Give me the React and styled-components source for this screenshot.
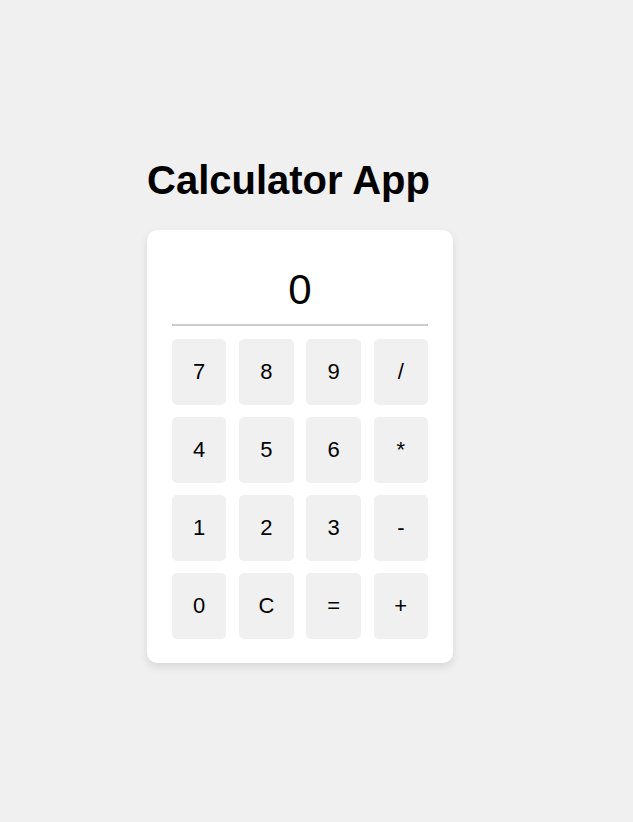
import React, { useState } from 'react';
import styled, { createGlobalStyle } from 'styled-components';

const GlobalStyle = createGlobalStyle`
  html, body {
    margin: 0;
    padding: 0;
    background: #f0f0f0;
    font-family: "Liberation Sans", Arial, sans-serif;
  }
`;

const Page = styled.div`
  display: flex;
  justify-content: center;
  padding-top: 158px;
  min-height: 822px;
  box-sizing: border-box;
`;

const Column = styled.div`
  width: 339px;
`;

const Title = styled.h1`
  margin: 0 0 27px;
  font-size: 40px;
  font-weight: bold;
  color: #000;
`;

const Card = styled.div`
  width: 306px;
  box-sizing: border-box;
  padding: 25px 25px 24px;
  background: #fff;
  border-radius: 10px;
  box-shadow: 0 4px 8px rgba(0, 0, 0, 0.1);
`;

const Display = styled.div`
  height: 71px;
  box-sizing: border-box;
  padding: 11px 0 10px;
  border-bottom: 2px solid #ccc;
  text-align: center;
  font-size: 42px;
  line-height: 48px;
  color: #000;
  margin-bottom: 13px;
`;

const Keys = styled.div`
  display: grid;
  grid-template-columns: repeat(4, 1fr);
  gap: 12px 12.8px;
`;

const Key = styled.button`
  height: 66px;
  border: none;
  border-radius: 5px;
  background: #f0f0f0;
  font-family: "Liberation Sans", Arial, sans-serif;
  font-size: 22px;
  color: #000;
  padding: 0;
  cursor: pointer;

  &:hover {
    background: #e4e4e4;
  }
`;

const keys = ['7', '8', '9', '/', '4', '5', '6', '*', '1', '2', '3', '-', '0', 'C', '=', '+'];

export default function App() {
  const [value, setValue] = useState('0');

  const press = k => {
    if (k === 'C') return setValue('0');
    if (k === '=') {
      try {
        // eslint-disable-next-line no-new-func
        setValue(String(Function(`return (${value})`)()));
      } catch (e) {
        setValue('Error');
      }
      return;
    }
    setValue(v => (v === '0' || v === 'Error' ? k : v + k));
  };

  return (
    <>
      <GlobalStyle />
      <Page>
        <Column>
          <Title>Calculator App</Title>
          <Card>
            <Display>{value}</Display>
            <Keys>
              {keys.map(k => (
                <Key key={k} onClick={() => press(k)}>
                  {k}
                </Key>
              ))}
            </Keys>
          </Card>
        </Column>
      </Page>
    </>
  );
}
